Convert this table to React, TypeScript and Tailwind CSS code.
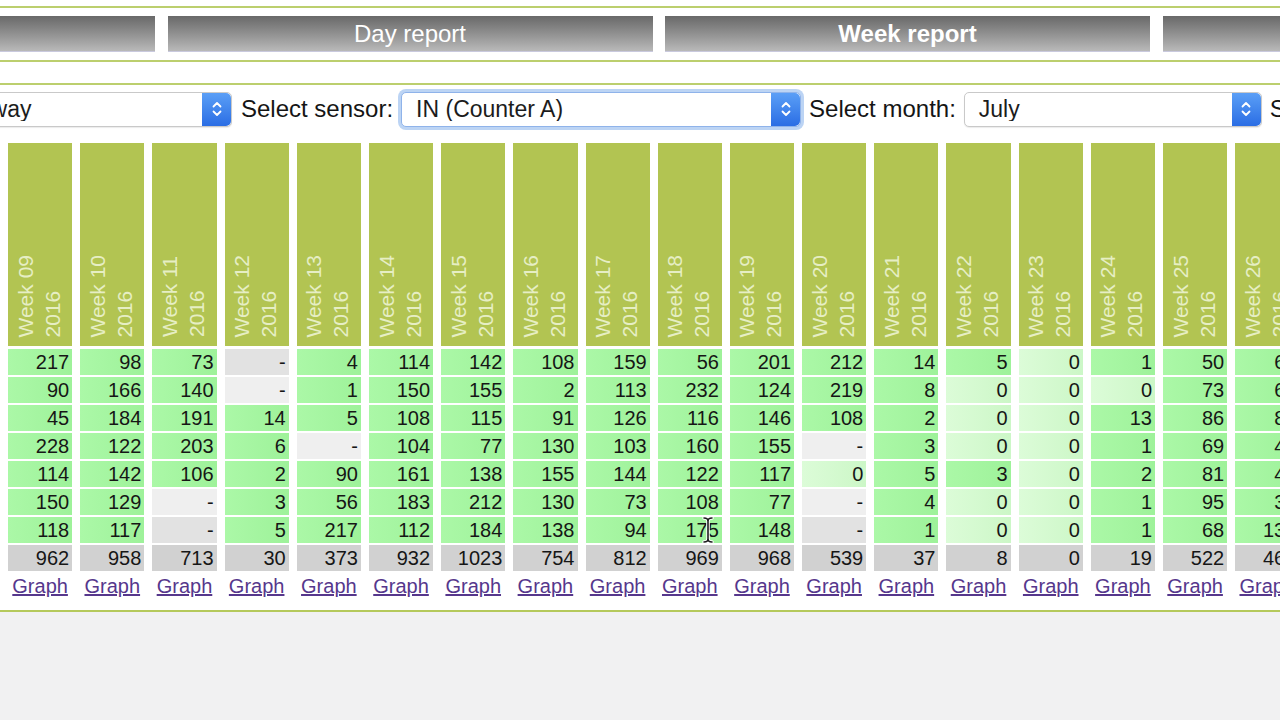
import React from "react";

type Week = { week: string; days: (number | null)[]; total: number };

const weeks: Week[] = [
  { week: "09", days: [217, 90, 45, 228, 114, 150, 118], total: 962 },
  { week: "10", days: [98, 166, 184, 122, 142, 129, 117], total: 958 },
  { week: "11", days: [73, 140, 191, 203, 106, null, null], total: 713 },
  { week: "12", days: [null, null, 14, 6, 2, 3, 5], total: 30 },
  { week: "13", days: [4, 1, 5, null, 90, 56, 217], total: 373 },
  { week: "14", days: [114, 150, 108, 104, 161, 183, 112], total: 932 },
  { week: "15", days: [142, 155, 115, 77, 138, 212, 184], total: 1023 },
  { week: "16", days: [108, 2, 91, 130, 155, 130, 138], total: 754 },
  { week: "17", days: [159, 113, 126, 103, 144, 73, 94], total: 812 },
  { week: "18", days: [56, 232, 116, 160, 122, 108, 175], total: 969 },
  { week: "19", days: [201, 124, 146, 155, 117, 77, 148], total: 968 },
  { week: "20", days: [212, 219, 108, null, 0, null, null], total: 539 },
  { week: "21", days: [14, 8, 2, 3, 5, 4, 1], total: 37 },
  { week: "22", days: [5, 0, 0, 0, 3, 0, 0], total: 8 },
  { week: "23", days: [0, 0, 0, 0, 0, 0, 0], total: 0 },
  { week: "24", days: [1, 0, 13, 1, 2, 1, 1], total: 19 },
  { week: "25", days: [50, 73, 86, 69, 81, 95, 68], total: 522 },
  { week: "26", days: [65, 62, 84, 45, 43, 38, 130], total: 467 },
];

const tabs = ["Live view", "Day report", "Week report", "Month report"];

function cellColor(value: number | null, row: number) {
  if (value === null) {
    return row === 0 || row === 6 ? "bg-[#e2e2e2]" : "bg-[#efefef]";
  }
  if (value === 0) {
    return "bg-linear-to-r from-[#dcfcd8] to-[#ccf7c7]";
  }
  return "bg-linear-to-r from-[#abf8a7] to-[#9ef29a]";
}

function Stepper() {
  return (
    <div className="flex h-full w-[29px] flex-none items-center justify-center rounded-r-[5px] bg-linear-to-b from-[#5b9ff6] to-[#2b6de4]">
      <svg width="12" height="20" viewBox="0 0 12 20" fill="none">
        <path d="M2.5 7.5 L6 4 L9.5 7.5" stroke="white" strokeWidth="1.8" strokeLinecap="round" strokeLinejoin="round" />
        <path d="M2.5 12.5 L6 16 L9.5 12.5" stroke="white" strokeWidth="1.8" strokeLinecap="round" strokeLinejoin="round" />
      </svg>
    </div>
  );
}

function FakeSelect({
  value,
  widthClass,
  focused,
}: {
  value: string;
  widthClass: string;
  focused?: boolean;
}) {
  return (
    <div
      className={`flex h-[35px] flex-none items-center rounded-[5px] border bg-white text-[23px] text-[#1c1c1c] ${widthClass} ${
        focused
          ? "border-[#8fb3ea] shadow-[0_0_0_3px_#bcd4f4]"
          : "border-[#c9c9c9] shadow-[0_1px_1px_rgba(0,0,0,0.08)]"
      }`}
    >
      <span className="flex-1 truncate pl-[14px] leading-none">{value}</span>
      <Stepper />
    </div>
  );
}

function IBeam() {
  return (
    <svg
      className="pointer-events-none absolute left-[44px] top-[-1px]"
      width="12"
      height="28"
      viewBox="0 0 12 28"
      fill="none"
    >
      <g stroke="white" strokeWidth="3.5" strokeLinecap="round">
        <path d="M2 2 Q6 2 6 5 Q6 2 10 2" />
        <path d="M6 5 V23" />
        <path d="M2 26 Q6 26 6 23 Q6 26 10 26" />
      </g>
      <g stroke="#1e1e1e" strokeWidth="1.6" strokeLinecap="round">
        <path d="M2 2 Q6 2 6 5 Q6 2 10 2" />
        <path d="M6 5 V23" />
        <path d="M2 26 Q6 26 6 23 Q6 26 10 26" />
      </g>
    </svg>
  );
}

export default function App() {
  return (
    <div className="h-[720px] w-[1280px] overflow-hidden bg-[#f1f1f2] font-['Liberation_Sans',Arial,sans-serif]">
      <div className="bg-white pt-[6px]">
        {/* top rule */}
        <div className="h-[2px] bg-[#bccf6e]" />

        {/* report tabs */}
        <div className="mt-[8px] -ml-[330px] flex gap-[12.5px]">
          {tabs.map((tab) => (
            <div
              key={tab}
              className={`flex h-[36px] w-[485px] flex-none items-center justify-center border-b border-[#c9c9de] bg-linear-to-b from-[#696969] to-[#b9b9b9] text-[24px] text-white ${
                tab === "Week report" ? "font-bold" : ""
              }`}
            >
              {tab}
            </div>
          ))}
        </div>

        <div className="mt-[8px] h-[2px] bg-[#bccf6e]" />
        <div className="mt-[21px] h-[2px] bg-[#bccf6e]" />

        {/* filters */}
        <div className="mt-[6px] -ml-[64px] flex items-center gap-[8px] text-[24px] text-[#151515]">
          <FakeSelect value="Hallway" widthClass="w-[296px]" />
          <span className="ml-[1px] whitespace-nowrap">Select sensor:</span>
          <FakeSelect value="IN (Counter A)" widthClass="w-[400px]" focused />
          <span className="whitespace-nowrap">Select month:</span>
          <FakeSelect value="July" widthClass="w-[298px]" />
          <span className="whitespace-nowrap">Select year:</span>
        </div>

        {/* week table */}
        <div className="mt-[16px] ml-[8px] flex gap-[8px] pb-[12px]">
          {weeks.map((w) => (
            <div key={w.week} className="flex w-[64.2px] flex-none flex-col gap-[2px]">
              <div className="mb-[1px] flex h-[203px] items-end justify-center bg-[#b2c452] pb-[9px] pr-[3px]">
                <span className="rotate-180 text-[21px] leading-[27px] text-[#e6eec4] [writing-mode:vertical-rl] whitespace-nowrap">
                  Week {w.week}
                  <br />
                  2016
                </span>
              </div>
              {w.days.map((v, i) => (
                <div
                  key={i}
                  className={`relative h-[26px] pr-[3px] text-right text-[20px] leading-[26px] text-[#161616] ${cellColor(v, i)}`}
                >
                  {v === null ? "-" : v}
                  {w.week === "18" && i === 6 && <IBeam />}
                </div>
              ))}
              <div className="h-[26px] bg-[#d1d1d1] pr-[3px] text-right text-[20px] leading-[26px] text-[#161616]">
                {w.total}
              </div>
              <a
                href="#"
                className="mt-[2px] text-center text-[20px] leading-[23px] text-[#56378c] underline"
              >
                Graph
              </a>
            </div>
          ))}
        </div>

        <div className="h-[2px] bg-[#b5c95c]" />
      </div>
    </div>
  );
}
